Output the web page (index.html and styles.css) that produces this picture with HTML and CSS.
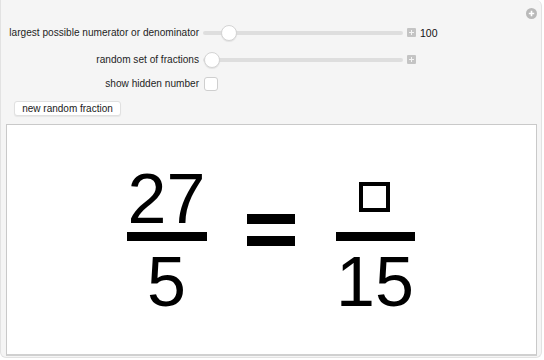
FILE: index.html
```html
<!DOCTYPE html>
<html>
<head>
<meta charset="utf-8">
<link rel="stylesheet" href="styles.css">
</head>
<body>
<div class="panel">
  <span class="corner-btn"><svg width="11" height="11" viewBox="0 0 11 11"><circle cx="5.5" cy="5.5" r="5.5" fill="#b9b9b9"/><path d="M5.5 2.8v5.4M2.8 5.5h5.4" stroke="#fff" stroke-width="1.6"/></svg></span>
  <div class="controls">
    <div class="label">largest possible numerator or denominator</div>
    <div class="slider"><div class="track"></div><div class="thumb" style="left:18px"></div></div>
    <div class="extra"><span class="plus"></span><span class="value">100</span></div>

    <div class="label">random set of fractions</div>
    <div class="slider"><div class="track"></div><div class="thumb" style="left:1px"></div></div>
    <div class="extra"><span class="plus"></span></div>

    <div class="label">show hidden number</div>
    <div class="check-cell"><span class="checkbox"></span></div>
    <div></div>
  </div>
  <div class="btn-row"><button class="btn">new random fraction</button></div>
  <div class="display">
    <div class="equation">
      <div class="frac f1">
        <div class="num">27</div>
        <div class="bar"></div>
        <div class="den">5</div>
      </div>
      <div class="equals"><div class="eqbar"></div><div class="eqbar"></div></div>
      <div class="frac f2">
        <div class="num"><span class="box"></span></div>
        <div class="bar"></div>
        <div class="den">15</div>
      </div>
    </div>
  </div>
</div>
</body>
</html>
```

FILE: styles.css
```css
html, body {
  margin: 0;
  padding: 0;
  background: #ffffff;
}
body {
  font-family: "Liberation Sans", Arial, sans-serif;
  width: 544px;
  height: 360px;
  overflow: hidden;
}
.panel {
  position: relative;
  box-sizing: border-box;
  width: 542px;
  height: 358px;
  background: #f5f5f5;
  border: 1px solid #e2e2e2;
  border-top: none;
  border-radius: 0 6px 6px 6px;
  padding: 19px 5px 0 5px;
}
.corner-btn {
  position: absolute;
  right: 4px;
  top: 8px;
  width: 11px;
  height: 11px;
  display: block;
}
.corner-btn svg { display: block; }
.controls {
  display: grid;
  grid-template-columns: 193px 200px auto;
  grid-template-rows: 27px 27px 21px;
  column-gap: 4px;
  align-items: center;
  font-size: 10.1px;
  color: #1e1e1e;
}
.label {
  text-align: right;
  white-space: nowrap;
}
.slider {
  position: relative;
  height: 18px;
}
.track {
  position: absolute;
  left: 0;
  right: 0;
  top: 7px;
  height: 4px;
  border-radius: 2px;
  background: #dedede;
}
.thumb {
  position: absolute;
  top: 1px;
  width: 16px;
  height: 16px;
  box-sizing: border-box;
  border-radius: 50%;
  background: #ffffff;
  border: 1px solid #d4d4d4;
  box-shadow: 0 1px 1px rgba(0,0,0,0.08);
}
.extra {
  display: flex;
  align-items: center;
  gap: 4px;
}
.plus {
  position: relative;
  width: 9px;
  height: 9px;
  background: #c4c4c4;
  border-radius: 1px;
}
.plus::before, .plus::after {
  content: "";
  position: absolute;
  background: #f4f4f4;
}
.plus::before { left: 4px; top: 2px; width: 1px; height: 5px; }
.plus::after { left: 2px; top: 4px; width: 5px; height: 1px; }
.value {
  font-size: 10.5px;
  color: #111;
}
.check-cell {
  display: flex;
  align-items: center;
}
.checkbox {
  display: block;
  width: 14px;
  height: 14px;
  box-sizing: border-box;
  margin-left: 1px;
  border: 1px solid #cfcfcf;
  border-radius: 3px;
  background: #fff;
}
.btn-row {
  margin-top: 7px;
  padding-left: 8px;
}
.btn {
  display: block;
  font-family: "Liberation Sans", Arial, sans-serif;
  font-size: 10px;
  color: #1a1a1a;
  background: #ffffff;
  border: 1px solid #e0e0e0;
  border-radius: 3px;
  box-shadow: 0 1px 1px rgba(0,0,0,0.06);
  width: 107px;
  height: 15px;
  padding: 0;
  line-height: 13px;
}
.display {
  box-sizing: border-box;
  margin-top: 8px;
  width: 531px;
  height: 232px;
  background: #ffffff;
  border: 1px solid #c9c9c9;
  border-bottom: 2px solid #d0d0d0;
  padding-top: 49px;
}
.equation {
  display: flex;
  justify-content: center;
  align-items: flex-start;
  font-size: 70px;
  color: #000;
  padding-right: 2px;
}
.frac {
  display: flex;
  flex-direction: column;
  align-items: center;
}
.f1 { width: 80px; }
.f2 { width: 79px; }
.num, .den {
  height: 50px;
  line-height: 50px;
  text-align: center;
}
.num { display: flex; justify-content: center; }
.bar {
  width: 100%;
  height: 9px;
  background: #000;
  margin-top: 8px;
}
.den { margin-top: 16px; }
.box {
  display: block;
  box-sizing: border-box;
  width: 31px;
  height: 30px;
  border: 4px solid #000;
  margin-top: 8px;
  margin-left: -2px;
}
.equals {
  width: 48px;
  margin: 40px 41px 0 40px;
}
.eqbar {
  height: 10px;
  background: #000;
}
.eqbar + .eqbar { margin-top: 12px; }
```
